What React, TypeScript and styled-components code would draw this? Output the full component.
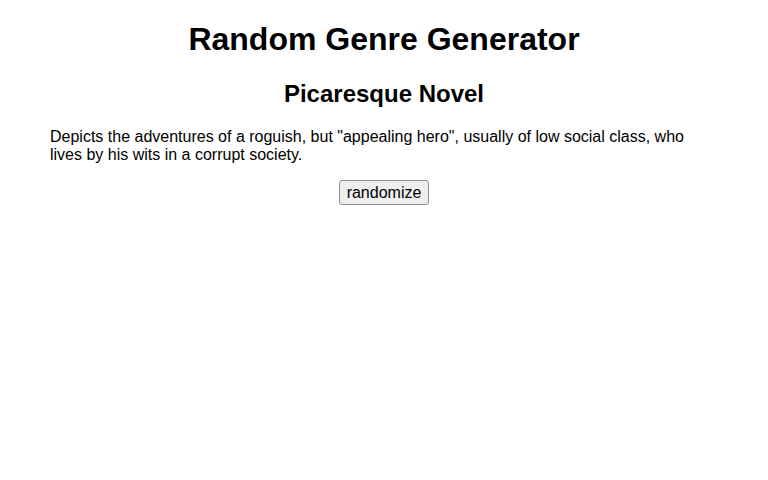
import React, { useState } from "react";
import styled, { createGlobalStyle } from "styled-components";

type Genre = {
  name: string;
  description: string;
};

const genres: Genre[] = [
  {
    name: "Picaresque Novel",
    description:
      'Depicts the adventures of a roguish, but "appealing hero", usually of low social class, who lives by his wits in a corrupt society.',
  },
  {
    name: "Space Opera",
    description:
      "Emphasizes space warfare, melodramatic adventure, interplanetary battles, chivalric romance and risk-taking.",
  },
  {
    name: "Gothic Fiction",
    description:
      "Combines fiction and horror, death, and at times romance, often set in decaying castles or mansions.",
  },
];

const GlobalStyle = createGlobalStyle`
  body {
    margin: 0 8px;
    background: #ffffff;
    color: #000000;
    font-family: "Liberation Sans", Arial, sans-serif;
  }
`;

const Page = styled.div`
  padding: 0 42px;
  text-align: center;
`;

const Title = styled.h1`
  font-size: 32px;
  margin: 21.44px 0;
`;

const GenreName = styled.h2`
  font-size: 24px;
  margin: 19.92px 0;
`;

const Description = styled.p`
  font-size: 16px;
  margin: 16px 0;
  text-align: left;
`;

const RandomButton = styled.button`
  font-family: "Liberation Sans", Arial, sans-serif;
  font-size: 16px;
  line-height: 19px;
  padding: 2px 7px;
  color: #000000;
  background: #efefef;
  border: 1px solid #8f8f8f;
  border-radius: 3px;
  cursor: pointer;
`;

function App() {
  const [index, setIndex] = useState(0);
  const genre = genres[index];

  const randomize = () => {
    setIndex(Math.floor(Math.random() * genres.length));
  };

  return (
    <Page>
      <GlobalStyle />
      <Title>Random Genre Generator</Title>
      <GenreName>{genre.name}</GenreName>
      <Description>{genre.description}</Description>
      <RandomButton onClick={randomize}>randomize</RandomButton>
    </Page>
  );
}

export default App;
